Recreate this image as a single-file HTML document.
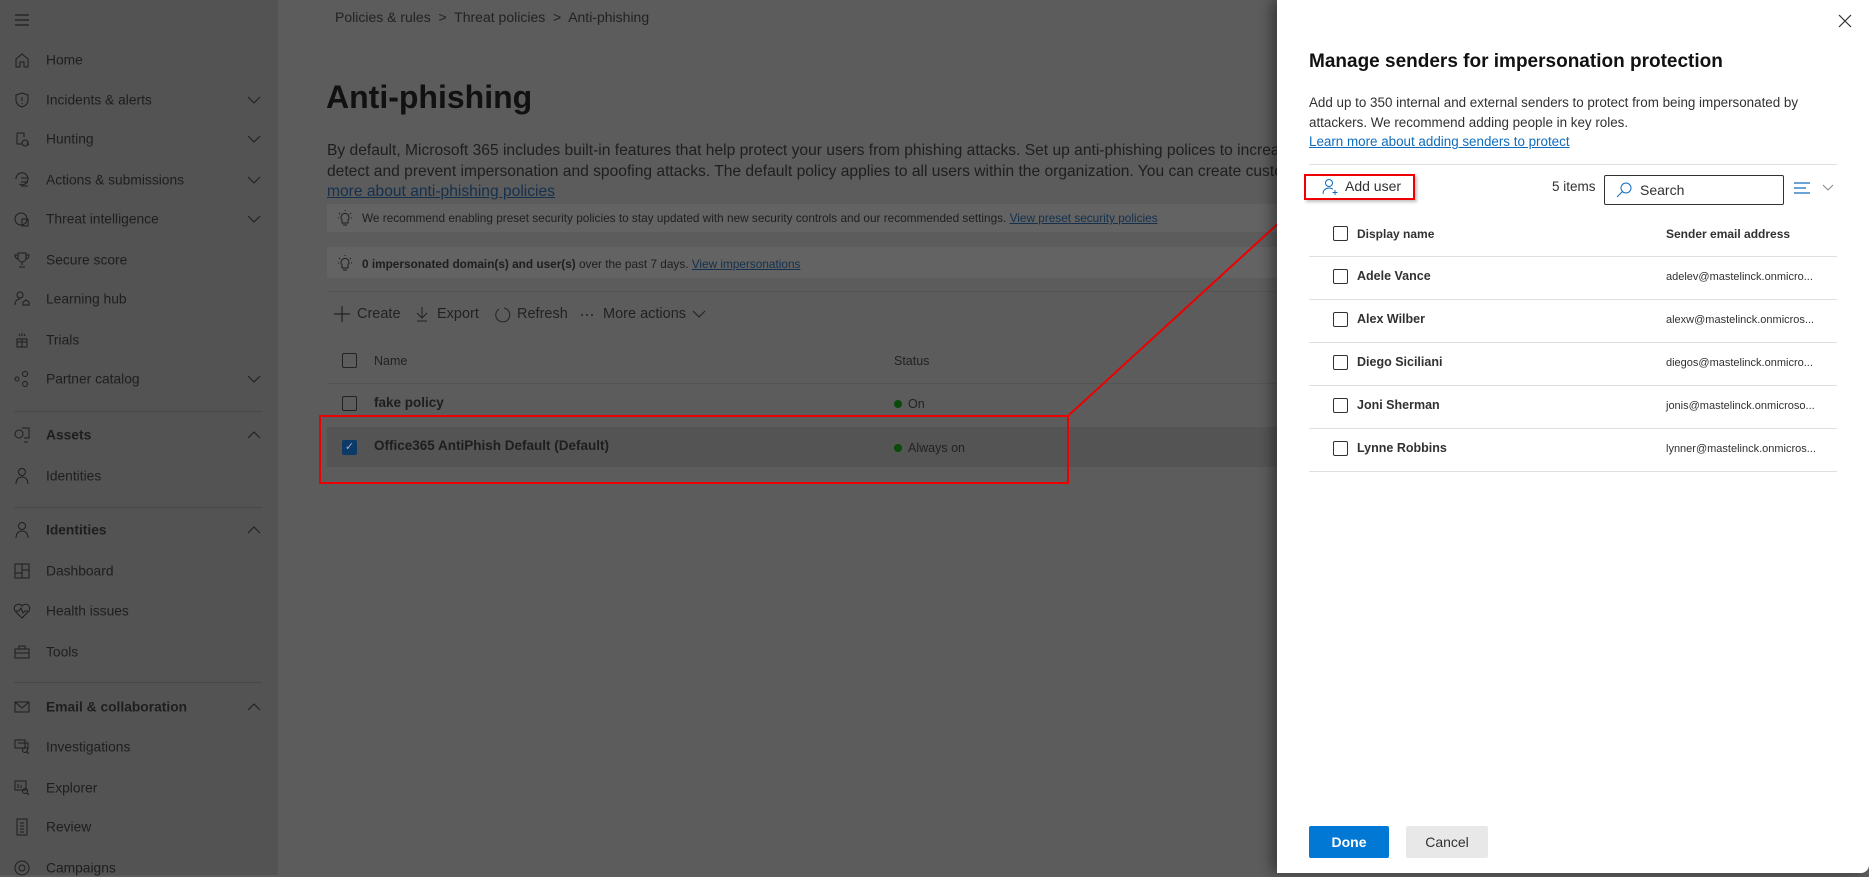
<!DOCTYPE html>
<html><head><meta charset="utf-8"><style>
*{margin:0;padding:0;box-sizing:border-box}
body{width:1869px;height:875px;overflow:hidden;background:#5c5c5c;font-family:"Liberation Sans",sans-serif;color:#1b1b1b;position:relative}
.a{position:absolute;white-space:nowrap}
#side{position:absolute;left:0;top:0;width:278px;height:875px;background:#535353}
.nav{position:absolute;left:46px;font-size:13.8px;color:#1e1e1e;transform:translateY(-50%)}
.ic{position:absolute;left:13px;width:18px;height:18px;transform:translateY(-50%)}
.chev{position:absolute;left:247px;width:14px;height:14px;transform:translateY(-50%)}
.div{position:absolute;left:14px;width:248px;height:1px;background:#474747}
.cb{position:absolute;width:15px;height:15px;border:1px solid #222;border-radius:2px}
#panel{position:absolute;left:1277px;top:0;width:592px;height:873px;background:#fff;border-bottom-right-radius:8px;box-shadow:-6px 0 12px rgba(0,0,0,.35)}
.p{position:absolute;white-space:nowrap}
.row{position:absolute;left:32px;width:528px;height:1px;background:#e1dfdd}
.pcb{position:absolute;left:56px;width:15px;height:15px;border:1px solid #323130;border-radius:2px}
.nm{position:absolute;left:80px;font-size:12.5px;font-weight:bold;color:#323130;transform:translateY(-50%)}
.em{position:absolute;left:389px;font-size:11px;color:#323130;transform:translateY(-50%)}
</style></head><body>
<div id="side">
<svg class="a" style="left:14px;top:13px" width="16" height="14"><path d="M1 2h14M1 7h14M1 12h14" stroke="#1e1e1e" stroke-width="1.3"/></svg>
<svg class="ic" style="top:60px" viewBox="0 0 18 18"><path d="M3 8l6-5 6 5v8h-4v-5H7v5H3z" fill="none" stroke="#1e1e1e"/></svg><div class="nav" style="top:60px">Home</div>
<svg class="ic" style="top:100px" viewBox="0 0 18 18"><path d="M9 2l6 2v5c0 4-3 6-6 7-3-1-6-3-6-7V4z M9 6v4 M9 12v1" fill="none" stroke="#1e1e1e"/></svg><div class="nav" style="top:100px">Incidents &amp; alerts</div>
<svg class="ic" style="top:139px" viewBox="0 0 18 18"><path d="M4 3h7v4 M4 3v11h5 M12 10a3 3 0 1 0 .1 0 M14 13l2 2" fill="none" stroke="#1e1e1e"/></svg><div class="nav" style="top:139px">Hunting</div>
<svg class="ic" style="top:180px" viewBox="0 0 18 18"><path d="M3 8a6 6 0 1 1 3 5 M8 7h7 M8 11h7 M8 15h7" fill="none" stroke="#1e1e1e"/></svg><div class="nav" style="top:180px">Actions &amp; submissions</div>
<svg class="ic" style="top:219px" viewBox="0 0 18 18"><circle cx="8" cy="9" r="6" fill="none" stroke="#1e1e1e"/><rect x="9" y="9" width="6" height="7" fill="none" stroke="#1e1e1e"/></svg><div class="nav" style="top:219px">Threat intelligence</div>
<svg class="ic" style="top:260px" viewBox="0 0 18 18"><path d="M5 2h8v5a4 4 0 0 1-8 0z M9 11v3 M6 16h6 M5 4H2c0 3 2 4 3 4 M13 4h3c0 3-2 4-3 4" fill="none" stroke="#1e1e1e"/></svg><div class="nav" style="top:260px">Secure score</div>
<svg class="ic" style="top:299px" viewBox="0 0 18 18"><circle cx="7" cy="5" r="3" fill="none" stroke="#1e1e1e"/><path d="M2 15c0-4 2-6 5-6 M10 12l3-2 3 2v3h-6z" fill="none" stroke="#1e1e1e"/></svg><div class="nav" style="top:299px">Learning hub</div>
<svg class="ic" style="top:340px" viewBox="0 0 18 18"><path d="M4 8h10v8H4z M4 11h10 M9 8v8 M6 3l1 2 M12 3l-1 2 M9 2v3" fill="none" stroke="#1e1e1e"/></svg><div class="nav" style="top:340px">Trials</div>
<svg class="ic" style="top:379px" viewBox="0 0 18 18"><circle cx="4" cy="9" r="2" fill="none" stroke="#1e1e1e"/><circle cx="12" cy="4" r="2.5" fill="none" stroke="#1e1e1e"/><circle cx="12" cy="14" r="2.5" fill="none" stroke="#1e1e1e"/></svg><div class="nav" style="top:379px">Partner catalog</div>
<div class="div" style="top:411px"></div>
<svg class="ic" style="top:435px" viewBox="0 0 18 18"><circle cx="6" cy="8" r="4" fill="none" stroke="#1e1e1e"/><path d="M9 2h7v10h-5 M11 16h4" fill="none" stroke="#1e1e1e"/></svg><div class="nav" style="top:435px;font-weight:bold">Assets</div>
<svg class="ic" style="top:476px" viewBox="0 0 18 18"><circle cx="9" cy="5" r="3.5" fill="none" stroke="#1e1e1e"/><path d="M3 17c0-5 3-7 6-7s6 2 6 7" fill="none" stroke="#1e1e1e"/></svg><div class="nav" style="top:476px">Identities</div>
<div class="div" style="top:507px"></div>
<svg class="ic" style="top:530px" viewBox="0 0 18 18"><circle cx="9" cy="5" r="3.5" fill="none" stroke="#1e1e1e"/><path d="M3 17c0-5 3-7 6-7s6 2 6 7" fill="none" stroke="#1e1e1e"/></svg><div class="nav" style="top:530px;font-weight:bold">Identities</div>
<svg class="ic" style="top:571px" viewBox="0 0 18 18"><path d="M2 2h14v14H2z M9 2v14 M9 8h7 M2 11h7" fill="none" stroke="#1e1e1e"/></svg><div class="nav" style="top:571px">Dashboard</div>
<svg class="ic" style="top:611px" viewBox="0 0 18 18"><path d="M9 16L2 9a4 4 0 0 1 7-5 4 4 0 0 1 7 5z M3 9h3l2-3 2 5 2-2h3" fill="none" stroke="#1e1e1e"/></svg><div class="nav" style="top:611px">Health issues</div>
<svg class="ic" style="top:652px" viewBox="0 0 18 18"><path d="M2 6h14v9H2z M6 6V3h6v3 M2 10h14" fill="none" stroke="#1e1e1e"/></svg><div class="nav" style="top:652px">Tools</div>
<div class="div" style="top:682px"></div>
<svg class="ic" style="top:707px" viewBox="0 0 18 18"><path d="M2 4h14v10H2z M2 4l7 6 7-6" fill="none" stroke="#1e1e1e"/></svg><div class="nav" style="top:707px;font-weight:bold">Email &amp; collaboration</div>
<svg class="ic" style="top:747px" viewBox="0 0 18 18"><path d="M2 2h10v8H2z M5 5h10v6 M13 13l3 3" fill="none" stroke="#1e1e1e"/><circle cx="12" cy="12" r="2.5" fill="none" stroke="#1e1e1e"/></svg><div class="nav" style="top:747px">Investigations</div>
<svg class="ic" style="top:788px" viewBox="0 0 18 18"><path d="M2 2h11v9H2z M5 5v4 M8 6v3 M14 14l2 2" fill="none" stroke="#1e1e1e"/><circle cx="12" cy="12" r="2.5" fill="none" stroke="#1e1e1e"/></svg><div class="nav" style="top:788px">Explorer</div>
<svg class="ic" style="top:827px" viewBox="0 0 18 18"><path d="M4 1h10v16H4z M7 5h4 M7 8h4 M7 11h4 M7 14h4" fill="none" stroke="#1e1e1e"/></svg><div class="nav" style="top:827px">Review</div>
<svg class="ic" style="top:868px" viewBox="0 0 18 18"><circle cx="9" cy="9" r="7" fill="none" stroke="#1e1e1e"/><circle cx="9" cy="9" r="3" fill="none" stroke="#1e1e1e"/></svg><div class="nav" style="top:868px">Campaigns</div>
<svg class="chev" style="top:100px" viewBox="0 0 14 14"><path d="M1 4l6 6 6-6" fill="none" stroke="#1e1e1e"/></svg>
<svg class="chev" style="top:139px" viewBox="0 0 14 14"><path d="M1 4l6 6 6-6" fill="none" stroke="#1e1e1e"/></svg>
<svg class="chev" style="top:180px" viewBox="0 0 14 14"><path d="M1 4l6 6 6-6" fill="none" stroke="#1e1e1e"/></svg>
<svg class="chev" style="top:219px" viewBox="0 0 14 14"><path d="M1 4l6 6 6-6" fill="none" stroke="#1e1e1e"/></svg>
<svg class="chev" style="top:379px" viewBox="0 0 14 14"><path d="M1 4l6 6 6-6" fill="none" stroke="#1e1e1e"/></svg>
<svg class="chev" style="top:435px" viewBox="0 0 14 14"><path d="M1 10l6-6 6 6" fill="none" stroke="#1e1e1e"/></svg>
<svg class="chev" style="top:530px" viewBox="0 0 14 14"><path d="M1 10l6-6 6 6" fill="none" stroke="#1e1e1e"/></svg>
<svg class="chev" style="top:707px" viewBox="0 0 14 14"><path d="M1 10l6-6 6 6" fill="none" stroke="#1e1e1e"/></svg>
</div>

<div class="a" style="left:335px;top:9px;font-size:14px;color:#222">Policies &amp; rules &nbsp;&gt;&nbsp; Threat policies &nbsp;&gt;&nbsp; Anti-phishing</div>
<div class="a" style="left:326px;top:79px;font-size:32px;font-weight:bold;color:#111">Anti-phishing</div>
<div class="a" style="left:327px;top:141px;font-size:15.6px;line-height:20.5px;color:#1e1e1e">By default, Microsoft 365 includes built-in features that help protect your users from phishing attacks. Set up anti-phishing polices to increase<br>detect and prevent impersonation and spoofing attacks. The default policy applies to all users within the organization. You can create custom<br><span style="color:#14304d;text-decoration:underline">more about anti-phishing policies</span></div>
<div class="a" style="left:327px;top:204px;width:960px;height:28px;background:#636363"></div>
<svg class="a" style="left:337px;top:209px" width="16" height="18" viewBox="0 0 16 18"><path d="M5 11a4 4 0 1 1 6 0v3H5z M6 16h4 M8 1v1 M2 4l1 1 M14 4l-1 1 M1 9h1 M14 9h1" fill="none" stroke="#1e1e1e"/></svg>
<div class="a" style="left:362px;top:211px;font-size:11.8px;color:#1e1e1e">We recommend enabling preset security policies to stay updated with new security controls and our recommended settings. <span style="color:#14304d;text-decoration:underline">View preset security policies</span></div>
<div class="a" style="left:327px;top:247px;width:960px;height:31px;background:#636363"></div>
<svg class="a" style="left:337px;top:254px" width="16" height="18" viewBox="0 0 16 18"><path d="M5 11a4 4 0 1 1 6 0v3H5z M6 16h4 M8 1v1 M2 4l1 1 M14 4l-1 1 M1 9h1 M14 9h1" fill="none" stroke="#1e1e1e"/></svg>
<div class="a" style="left:362px;top:257px;font-size:11.8px;color:#1e1e1e"><b>0 impersonated domain(s) and user(s)</b> over the past 7 days. <span style="color:#14304d;text-decoration:underline">View impersonations</span></div>
<div class="a" style="left:327px;top:291px;width:960px;height:1px;background:#545454"></div>
<svg class="a" style="left:333px;top:305px" width="380" height="18"><path d="M9 1v16M1 9h16" stroke="#222" stroke-width="1.2"/><path d="M422 0" /><path d="M89 2v11M84 8l5 5 5-5M84 16h10" fill="none" stroke="#222"/><path d="M166 4a7 7 0 1 0 5 -1" fill="none" stroke="#222"/><circle cx="249" cy="10" r="1" fill="#222"/><circle cx="254" cy="10" r="1" fill="#222"/><circle cx="259" cy="10" r="1" fill="#222"/><path d="M360 6l6 6 6-6" fill="none" stroke="#222"/></svg>
<div class="a" style="left:357px;top:306px;font-size:14.5px;color:#222">Create</div>
<div class="a" style="left:437px;top:306px;font-size:14.5px;color:#222">Export</div>
<div class="a" style="left:517px;top:306px;font-size:14.5px;color:#222">Refresh</div>
<div class="a" style="left:603px;top:306px;font-size:14.5px;color:#222">More actions</div>
<div class="cb" style="left:342px;top:353px"></div>
<div class="a" style="left:374px;top:354px;font-size:12.5px;color:#222">Name</div>
<div class="a" style="left:894px;top:354px;font-size:12.5px;color:#222">Status</div>
<div class="a" style="left:327px;top:383px;width:960px;height:1px;background:#545454"></div>
<div class="cb" style="left:342px;top:396px"></div>
<div class="a" style="left:374px;top:395px;font-size:13.5px;font-weight:bold;color:#1e1e1e">fake policy</div>
<div class="a" style="left:894px;top:400px;width:8px;height:8px;border-radius:50%;background:#0a4a0a"></div>
<div class="a" style="left:908px;top:397px;font-size:12.5px;color:#222">On</div>
<div class="a" style="left:327px;top:427px;width:960px;height:40px;background:#545454"></div>
<div class="a" style="left:342px;top:440px;width:15px;height:15px;background:#0b3a66;border-radius:2px;color:#aac;font-size:11px;text-align:center;line-height:15px">✓</div>
<div class="a" style="left:374px;top:438px;font-size:13.5px;font-weight:bold;color:#1e1e1e">Office365 AntiPhish Default (Default)</div>
<div class="a" style="left:894px;top:444px;width:8px;height:8px;border-radius:50%;background:#0a4a0a"></div>
<div class="a" style="left:908px;top:441px;font-size:12.5px;color:#222">Always on</div>
<div class="a" style="left:319px;top:415px;width:750px;height:69px;border:2px solid #e00"></div>
<svg class="a" style="left:0;top:0" width="1869" height="875"><line x1="1069" y1="415" x2="1306" y2="198" stroke="#e00" stroke-width="2"/></svg>

<div id="panel">
<svg class="p" style="left:561px;top:14px" width="14" height="14"><path d="M1 1l12 12M13 1L1 13" stroke="#323130" stroke-width="1.2"/></svg>
<div class="p" style="left:32px;top:51px;font-size:19px;font-weight:bold;color:#111">Manage senders for impersonation protection</div>
<div class="p" style="left:32px;top:93px;font-size:13.4px;line-height:19.5px;color:#323130">Add up to 350 internal and external senders to protect from being impersonated by<br>attackers. We recommend adding people in key roles.<br><span style="color:#0f6cbd;text-decoration:underline">Learn more about adding senders to protect</span></div>
<div class="row" style="top:164px"></div>
<svg class="p" style="left:45px;top:178px" width="18" height="18" viewBox="0 0 18 18"><circle cx="7" cy="5" r="3.5" fill="none" stroke="#0f6cbd"/><path d="M1 16c0-4 3-6 6-6 2 0 3 1 4 1 M13 12v5 M10.5 14.5h5" fill="none" stroke="#0f6cbd"/></svg>
<div class="p" style="left:68px;top:178px;font-size:14px;color:#323130">Add user</div>
<div class="p" style="left:27px;top:174px;width:111px;height:26px;border:2px solid #e00;box-shadow:2px 2px 3px rgba(0,0,0,.25)"></div>
<div class="p" style="left:275px;top:179px;font-size:13.5px;color:#323130">5 items</div>
<div class="p" style="left:327px;top:175px;width:180px;height:30px;border:1px solid #323130;border-radius:2px"></div>
<svg class="p" style="left:338px;top:181px" width="18" height="18" viewBox="0 0 18 18"><circle cx="11" cy="7" r="5" fill="none" stroke="#0f6cbd"/><path d="M7.5 10.5L2 16" stroke="#0f6cbd"/></svg>
<div class="p" style="left:363px;top:182px;font-size:14px;color:#323130">Search</div>
<svg class="p" style="left:516px;top:181px" width="44" height="14"><path d="M1 2h16M1 7h12M1 12h16" stroke="#0f6cbd" stroke-width="1.2"/><path d="M30 4l5 5 5-5" fill="none" stroke="#8a8886"/></svg>
<div class="pcb" style="top:226px"></div>
<div class="p" style="left:80px;top:227px;font-size:12px;font-weight:bold;color:#323130">Display name</div>
<div class="p" style="left:389px;top:227px;font-size:12px;font-weight:bold;color:#323130">Sender email address</div>
<div class="row" style="top:256px"></div>
<div class="pcb" style="top:269px"></div><div class="nm" style="top:276px">Adele Vance</div><div class="em" style="top:277px">adelev@mastelinck.onmicro...</div>
<div class="row" style="top:299px"></div>
<div class="pcb" style="top:312px"></div><div class="nm" style="top:319px">Alex Wilber</div><div class="em" style="top:320px">alexw@mastelinck.onmicros...</div>
<div class="row" style="top:342px"></div>
<div class="pcb" style="top:355px"></div><div class="nm" style="top:362px">Diego Siciliani</div><div class="em" style="top:363px">diegos@mastelinck.onmicro...</div>
<div class="row" style="top:385px"></div>
<div class="pcb" style="top:398px"></div><div class="nm" style="top:405px">Joni Sherman</div><div class="em" style="top:406px">jonis@mastelinck.onmicroso...</div>
<div class="row" style="top:428px"></div>
<div class="pcb" style="top:441px"></div><div class="nm" style="top:448px">Lynne Robbins</div><div class="em" style="top:449px">lynner@mastelinck.onmicros...</div>
<div class="row" style="top:471px"></div>
<div class="p" style="left:32px;top:826px;width:80px;height:32px;background:#0078d4;border-radius:2px;color:#fff;font-size:14px;font-weight:bold;text-align:center;line-height:32px">Done</div>
<div class="p" style="left:129px;top:826px;width:82px;height:32px;background:#e8e8e8;border-radius:2px;color:#323130;font-size:14px;text-align:center;line-height:32px">Cancel</div>
</div>
</body></html>
